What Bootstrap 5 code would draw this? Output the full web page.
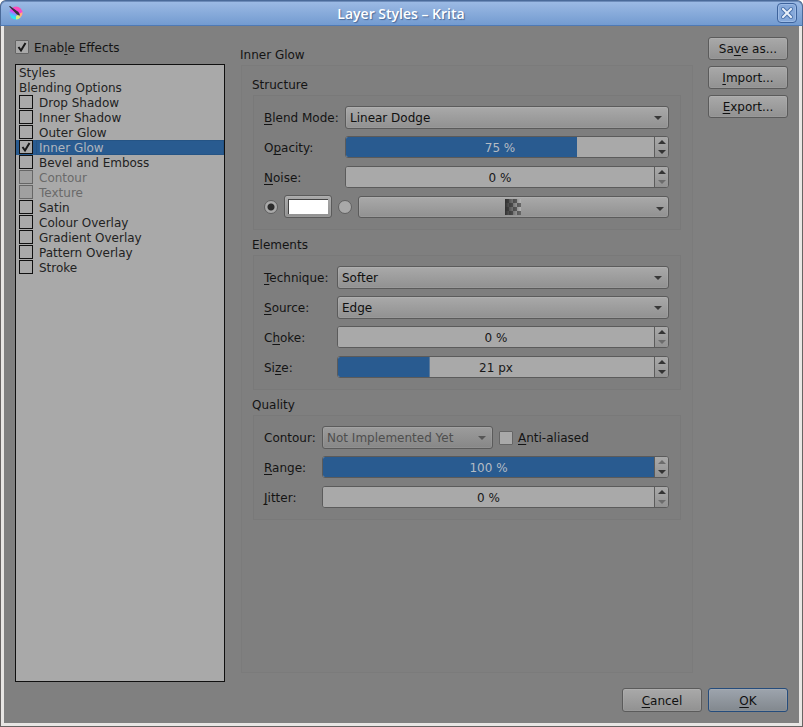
<!DOCTYPE html>
<html lang="en">
<head>
<meta charset="utf-8">
<meta name="viewport" content="width=device-width, initial-scale=1">
<title>Layer Styles – Krita</title>
<link href="https://cdn.jsdelivr.net/npm/bootstrap@5.3.0/dist/css/bootstrap.min.css" rel="stylesheet">
<style>
  body { font: 12px/15px "DejaVu Sans", sans-serif; color: #141414; background: #fff; }
  u { text-underline-offset: 2px; text-decoration-skip-ink: none; text-decoration-thickness: 1px; }
  .window { min-height: 100vh; background: #808080; border-radius: 6px 6px 0 0; overflow: hidden; }

  .titlebar { height: 26px; background: linear-gradient(#9dbbe5, #739bd0); border: 1px solid #4a6a99; border-bottom-color: #4f7ab5; border-radius: 6px 6px 0 0; padding: 0 5px 0 6px; box-shadow: inset 0 1px #6d8cba; }
  .titlebar h1 { font: 600 14px/20px "Open Sans", "Noto Sans", sans-serif; color: #fff; text-shadow: 1px 1px 1px #4a6a99; padding-top: 2px; }
  .close-btn { width: 20px; height: 20px; padding: 0; border: 1px solid #3d639c; border-radius: 4px; background: #86a9da; box-shadow: inset 0 0 0 1px #9dbbe5; }

  .frame { border: solid #686463; border-width: 0 1px 1px; box-shadow: inset 3px 0 #e8e6e4, inset -3px 0 #e8e6e4, inset 0 -3px #e8e6e4; padding: 11px 14px 14px; gap: 6px; }
  .columns { gap: 15px; }
  .sidebar { width: 210px; padding-top: 3px; gap: 9px; }
  .settings { padding: 10px 0 9px; gap: 1px; min-width: 0; }
  .actions { gap: 6px; }

  .master { height: 15px; gap: 5px; line-height: 17px; }
  .effects { border: 1px solid #101010; background: #a9a9a9; padding: 0; margin: 0; list-style: none; color: #222; line-height: 17px; }
  .effects li { height: 15px; padding-left: 3px; white-space: nowrap; }
  .effects label { flex: 1; padding-left: 3px; }
  .effects .current { background: #295b90; }
  .effects .current label { color: #b0b6be; box-shadow: inset 0 0 0 1px #255485; height: 15px; }
  .effects .off label { color: #6a6a6a; }

  .tick { appearance: none; flex: none; width: 14px; height: 14px; margin: 0; border: 1px solid #656565; border-radius: 1px; background: #a9a9a9 center/12px 12px no-repeat; }
  .tick:checked { background-image: url("data:image/svg+xml,%3Csvg xmlns='http://www.w3.org/2000/svg' viewBox='0 0 24 24'%3E%3Cpath d='m5 12 5 7L19 4' fill='none' stroke='%23181818' stroke-width='4'/%3E%3C/svg%3E"); }
  .effects .tick { border-color: #101010; border-radius: 0; margin-right: 3px; }
  .effects .off .tick { border-color: #666; background-color: #a0a0a0; }
  .dot { appearance: none; flex: none; width: 14px; height: 14px; margin: 0; border: 1px solid #606060; border-radius: 50%; background: #a9a9a9; }
  .dot:checked { background: radial-gradient(#2c2c2c 3px, #a9a9a9 4px); }

  .group-title { font: inherit; line-height: 17px; margin: 0; }
  .panel { border: 1px solid #7b7b7b; background: #7f7f7f; margin-left: 1px; padding: 11px 11px 0 10px; gap: 1px; }
  .section { border: 1px solid #797979; background: #7e7e7e; margin: 0 0 6px 1px; padding: 10px 11px 10px 10px; gap: 7px; }
  .line { height: 23px; }
  .line label { padding-top: 2px; }
  .line > label:first-child { flex: none; width: var(--name); }
  .structure { --name: 81px; padding-bottom: 12px; }
  .elements { --name: 73px; }
  .quality { --name: 58px; }
  .fill-row { height: 21px; gap: 6px; }
  .anti { gap: 5px; margin-left: 6px; }

  .face, .pick { border: 1px solid #5b5b5b; border-radius: 3px; background: linear-gradient(#a9a9a9, #919191); box-shadow: inset 0 0 0 1px #ffffff12; color: #101010; height: 23px; padding: 2px 0 0; }
  .pick { appearance: none; padding: 2px 20px 0 4px; min-width: 0; background: url("data:image/svg+xml,%3Csvg xmlns='http://www.w3.org/2000/svg' width='8' height='4'%3E%3Cpath d='M0 0h8L4 4z' fill='%23393939'/%3E%3C/svg%3E") right 6px center no-repeat, linear-gradient(#a9a9a9, #919191); }
  .pick:disabled { opacity: 1; color: #4e4e4e; width: 171px; background: url("data:image/svg+xml,%3Csvg xmlns='http://www.w3.org/2000/svg' width='8' height='4'%3E%3Cpath d='M0 0h8L4 4z' fill='%23565656'/%3E%3C/svg%3E") right 6px center no-repeat, linear-gradient(#9c9c9c, #878787); }
  .gradient-btn { padding: 0 4px 0 10px; height: 22px; align-self: flex-start; color: #393939; }

  .spin { height: 22px; align-self: flex-start; border: 1px solid #5b5b5b; border-radius: 3px; overflow: hidden; background: #a9a9a9; }
  .spin input { min-width: 0; border: 0; padding: 2px 0 0; text-align: center; color: #181818; background: linear-gradient(#295b90, #295b90) left/var(--fill, 0%) 100% no-repeat #a9a9a9; }
  .spin .lit { color: #b5bcc4; }
  .steps { flex: none; width: 14px; border-left: 1px solid #5b5b5b; background: linear-gradient(#a9a9a9, #929292); }
  .steps button { flex: 1; border: 0; padding: 0; background: none; color: #333; }
  .steps button:disabled { color: #6c6c6c; }
  .swatch { width: 48px; padding: 3px; }
  .swatch span { height: 15px; background: #fff; border: solid #444; border-width: 1px 0 0 1px; }

  .actions .face { width: 80px; }
  .actions .tall { height: 24px; }
  .actions .default { border-color: #254c7c; background: linear-gradient(#9da4ad, #82888e); }
</style>
<script src="https://cdn.jsdelivr.net/npm/bootstrap@5.3.0/dist/js/bootstrap.bundle.min.js"></script>
</head>
<body>
<svg class="d-none" aria-hidden="true">
  <symbol id="up" viewBox="0 0 8 4"><path d="M0 4 4 0l4 4z" fill="currentColor"/></symbol>
  <symbol id="down" viewBox="0 0 8 4"><path d="M0 0h8L4 4z" fill="currentColor"/></symbol>
</svg>
<div class="window d-flex flex-column">
  <header class="titlebar d-flex align-items-center">
    <svg width="18" height="18" viewBox="0 0 18 18" aria-hidden="true">
      <defs><linearGradient id="hue" x1=".7" y1="0" x2=".3" y2="1"><stop offset=".1" stop-color="#ff50b0"/><stop offset=".45" stop-color="#f03cf0"/><stop offset=".65" stop-color="#6aa8ff"/><stop offset=".9" stop-color="#22f0f0"/></linearGradient></defs>
      <circle cx="9" cy="9" r="6.500" fill="url(#hue)"/>
      <path d="M15.500 8a6.500 6.500 0 0 1-2 5.500L10 11z" fill="#ffb07a"/>
      <path d="M13.500 13.500A6.500 6.500 0 0 1 9 15.500L9 12l2-1z" fill="#d8f080"/>
      <path d="M2 2.500 3 2l7 5c2 1 2.500 2.500 3 4.500-2-.2-3.500-.7-4.500-2.500z" fill="#33313c"/>
    </svg>
    <h1 class="flex-grow-1 text-center mb-0">Layer Styles – Krita</h1>
    <button class="close-btn d-flex align-items-center justify-content-center" aria-label="Close">
      <svg width="12" height="12" viewBox="0 0 12 12"><path d="m2 2 8 8m0-8-8 8" stroke="#4a72ac" stroke-width="4"  stroke-linecap="square"/><path d="m2 2 8 8m0-8-8 8" stroke="#e8f0fa" stroke-width="2" stroke-linecap="square"/></svg>
    </button>
  </header>
  <main class="frame flex-grow-1 d-flex flex-column">
    <div class="columns d-flex flex-grow-1">
      <section class="sidebar d-flex flex-column flex-shrink-0">
        <div class="master d-flex">
          <input class="tick" type="checkbox" id="enable" checked><label for="enable">Enab<u>l</u>e Effects</label>
        </div>
        <ul class="effects flex-grow-1">
          <li>Styles</li>
          <li>Blending Options</li>
          <li class="d-flex"><input class="tick" type="checkbox" id="e1"><label for="e1">Drop Shadow</label></li>
          <li class="d-flex"><input class="tick" type="checkbox" id="e2"><label for="e2">Inner Shadow</label></li>
          <li class="d-flex"><input class="tick" type="checkbox" id="e3"><label for="e3">Outer Glow</label></li>
          <li class="d-flex current"><input class="tick" type="checkbox" id="e4" checked><label for="e4">Inner Glow</label></li>
          <li class="d-flex"><input class="tick" type="checkbox" id="e5"><label for="e5">Bevel and Emboss</label></li>
          <li class="d-flex off"><input class="tick" type="checkbox" id="e6" disabled><label for="e6">Contour</label></li>
          <li class="d-flex off"><input class="tick" type="checkbox" id="e7" disabled><label for="e7">Texture</label></li>
          <li class="d-flex"><input class="tick" type="checkbox" id="e8"><label for="e8">Satin</label></li>
          <li class="d-flex"><input class="tick" type="checkbox" id="e9"><label for="e9">Colour Overlay</label></li>
          <li class="d-flex"><input class="tick" type="checkbox" id="e10"><label for="e10">Gradient Overlay</label></li>
          <li class="d-flex"><input class="tick" type="checkbox" id="e11"><label for="e11">Pattern Overlay</label></li>
          <li class="d-flex"><input class="tick" type="checkbox" id="e12"><label for="e12">Stroke</label></li>
        </ul>
      </section>

      <section class="settings flex-grow-1 d-flex flex-column">
        <h2 class="group-title">Inner Glow</h2>
        <div class="panel flex-grow-1 d-flex flex-column">
          <h3 class="group-title">Structure</h3>
          <div class="section structure d-flex flex-column">
            <div class="line d-flex align-items-center"><label for="blend"><u>B</u>lend Mode:</label><select class="pick flex-grow-1" id="blend"><option>Linear Dodge</option></select></div>
            <div class="line d-flex align-items-center"><label for="opacity">O<u>p</u>acity:</label>
              <div class="spin d-flex flex-grow-1"><input class="lit flex-grow-1" id="opacity" value="75 %" style="--fill:75%">
                <div class="steps d-flex flex-column"><button class="d-flex align-items-center justify-content-center" aria-label="More"><svg width="8" height="4"><use href="#up"/></svg></button><button class="d-flex align-items-center justify-content-center" aria-label="Less"><svg width="8" height="4"><use href="#down"/></svg></button></div></div></div>
            <div class="line d-flex align-items-center"><label for="noise"><u>N</u>oise:</label>
              <div class="spin d-flex flex-grow-1"><input class="flex-grow-1" id="noise" value="0 %">
                <div class="steps d-flex flex-column"><button class="d-flex align-items-center justify-content-center" aria-label="More"><svg width="8" height="4"><use href="#up"/></svg></button><button class="d-flex align-items-center justify-content-center" aria-label="Less" disabled><svg width="8" height="4"><use href="#down"/></svg></button></div></div></div>
            <div class="fill-row d-flex align-items-center">
              <input class="dot" type="radio" name="fill" aria-label="Colour" checked>
              <button class="face swatch" aria-label="Pick colour"><span class="d-block"></span></button>
              <input class="dot" type="radio" name="fill" aria-label="Gradient">
              <button class="face gradient-btn flex-grow-1 d-flex align-items-center" aria-label="Pick gradient">
                <svg class="mx-auto" width="16" height="16" viewBox="0 0 16 16">
                  <defs>
                    <pattern id="checks" width="8" height="8" patternUnits="userSpaceOnUse"><path d="M0 0h8v8H0z" fill="#666"/><path d="M4 0h4v4H4zM0 4h4v4H0z" fill="#b4b4b4"/></pattern>
                    <linearGradient id="fade"><stop stop-color="#303030"/><stop offset="1" stop-color="#303030" stop-opacity="0"/></linearGradient>
                  </defs>
                  <path d="M0 0h16v16H0z" fill="url(#checks)"/><path d="M0 0h16v16H0z" fill="url(#fade)"/>
                </svg>
                <svg class="mt-1" width="8" height="4"><use href="#down"/></svg>
              </button>
            </div>
          </div>

          <h3 class="group-title">Elements</h3>
          <div class="section elements d-flex flex-column">
            <div class="line d-flex align-items-center"><label for="technique"><u>T</u>echnique:</label><select class="pick flex-grow-1" id="technique"><option>Softer</option></select></div>
            <div class="line d-flex align-items-center"><label for="source"><u>S</u>ource:</label><select class="pick flex-grow-1" id="source"><option>Edge</option></select></div>
            <div class="line d-flex align-items-center"><label for="choke">C<u>h</u>oke:</label>
              <div class="spin d-flex flex-grow-1"><input class="flex-grow-1" id="choke" value="0 %">
                <div class="steps d-flex flex-column"><button class="d-flex align-items-center justify-content-center" aria-label="More"><svg width="8" height="4"><use href="#up"/></svg></button><button class="d-flex align-items-center justify-content-center" aria-label="Less" disabled><svg width="8" height="4"><use href="#down"/></svg></button></div></div></div>
            <div class="line d-flex align-items-center"><label for="size">Si<u>z</u>e:</label>
              <div class="spin d-flex flex-grow-1"><input class="flex-grow-1" id="size" value="21 px" style="--fill:29%">
                <div class="steps d-flex flex-column"><button class="d-flex align-items-center justify-content-center" aria-label="More"><svg width="8" height="4"><use href="#up"/></svg></button><button class="d-flex align-items-center justify-content-center" aria-label="Less"><svg width="8" height="4"><use href="#down"/></svg></button></div></div></div>
          </div>

          <h3 class="group-title">Quality</h3>
          <div class="section quality d-flex flex-column">
            <div class="line d-flex align-items-center"><label for="contour">Contour:</label><select class="pick" id="contour" disabled><option>Not Implemented Yet</option></select>
              <div class="anti d-flex align-items-center"><input class="tick" type="checkbox" id="aa"><label for="aa"><u>A</u>nti-aliased</label></div></div>
            <div class="line d-flex align-items-center"><label for="range"><u>R</u>ange:</label>
              <div class="spin d-flex flex-grow-1"><input class="lit flex-grow-1" id="range" value="100 %" style="--fill:100%">
                <div class="steps d-flex flex-column"><button class="d-flex align-items-center justify-content-center" aria-label="More" disabled><svg width="8" height="4"><use href="#up"/></svg></button><button class="d-flex align-items-center justify-content-center" aria-label="Less"><svg width="8" height="4"><use href="#down"/></svg></button></div></div></div>
            <div class="line d-flex align-items-center"><label for="jitter"><u>J</u>itter:</label>
              <div class="spin d-flex flex-grow-1"><input class="flex-grow-1" id="jitter" value="0 %">
                <div class="steps d-flex flex-column"><button class="d-flex align-items-center justify-content-center" aria-label="More"><svg width="8" height="4"><use href="#up"/></svg></button><button class="d-flex align-items-center justify-content-center" aria-label="Less" disabled><svg width="8" height="4"><use href="#down"/></svg></button></div></div></div>
          </div>
        </div>
      </section>

      <div class="actions d-flex flex-column flex-shrink-0">
        <button class="face">Sa<u>v</u>e as...</button>
        <button class="face"><u>I</u>mport...</button>
        <button class="face"><u>E</u>xport...</button>
      </div>
    </div>
    <footer class="actions d-flex justify-content-end">
      <button class="face tall"><u>C</u>ancel</button>
      <button class="face tall default"><u>O</u>K</button>
    </footer>
  </main>
</div>
</body>
</html>
